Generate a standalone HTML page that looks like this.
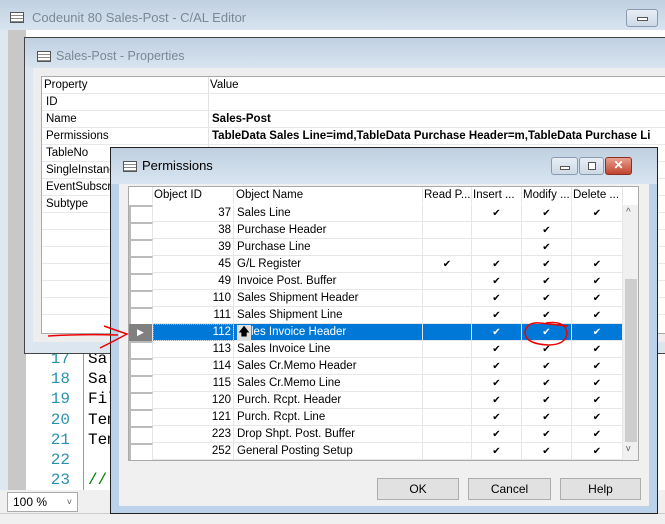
<!DOCTYPE html>
<html><head><style>
*{margin:0;padding:0;box-sizing:border-box}
body{width:665px;height:524px;overflow:hidden;position:relative;background:#dfe7f0;font-family:"Liberation Sans",sans-serif;font-size:11px;color:#000}
.a{position:absolute}
.tb{background:linear-gradient(#c0d0e0,#d8e4f0)}
.icon{position:absolute;width:14px;height:11px;border:1px solid #555;background:repeating-linear-gradient(#fff 0 2px,#888 2px 3px)}
.btn{position:absolute;border:1px solid #8a9ab0;border-radius:3px;background:linear-gradient(#e8eef5,#cdd9e6)}
.row{position:absolute;left:0;height:17px;width:494px;border-bottom:1px solid #e6e6e6}
.c{position:absolute;top:0;height:17px;line-height:17px;border-right:1px solid #e6e6e6;white-space:nowrap;overflow:hidden;font-size:11.5px}
.pb{position:absolute;height:22px;border:1px solid #adadad;background:#e1e1e1;text-align:center;line-height:20px;font-size:12px}
</style></head><body>
<div class="a tb" style="left:0;top:0;width:665px;height:30px"></div>
<div class="icon" style="left:10px;top:12px"></div>
<div class="a" style="left:32px;top:10px;font-size:13px;color:#7a8896">Codeunit 80 Sales-Post - C/AL Editor</div>
<div class="btn" style="left:626px;top:9px;width:32px;height:18px"><div class="a" style="left:10px;top:7px;width:11px;height:4px;border:1px solid #555;background:#fff"></div></div>
<div class="a" style="left:8px;top:30px;width:18px;height:484px;background:#c8c8c8"></div>
<div class="a" style="left:26px;top:30px;width:639px;height:460px;background:#fff"></div>
<div class="a" style="left:83px;top:350px;width:1px;height:140px;background:#999"></div>
<div class="a" style="left:44px;top:349px;font-family:'Liberation Mono',monospace;font-size:16px;line-height:20.2px;color:#2b91af;text-align:right;width:26px">17<br>18<br>19<br>20<br>21<br>22<br>23</div>
<div class="a" style="left:88px;top:349px;font-family:'Liberation Mono',monospace;font-size:16px;line-height:20.2px">Sal<br>Sal<br>Fil<br>Tem<br>Tem<br><br><span style="color:#008000">//</span></div>
<div class="a" style="left:0;top:490px;width:665px;height:24px;background:#f0f0f0"></div>
<div class="a" style="left:7px;top:492px;width:71px;height:20px;border:1px solid #aaa;background:#fff;font-size:12px;line-height:18px;padding-left:5px">100 %<span style="position:absolute;right:5px;font-size:9px;color:#555">˅</span></div>
<div class="a" style="left:0;top:513px;width:665px;height:11px;background:#f0f0f0;border-top:1px solid #ccc"></div>

<div class="a" style="left:24px;top:37px;width:645px;height:317px;border:1px solid #444;background:#dce6f0"></div>
<div class="a tb" style="left:25px;top:38px;width:640px;height:30px"></div>
<div class="icon" style="left:37px;top:51px"></div>
<div class="a" style="left:56px;top:49px;font-size:12.5px;color:#7a8896">Sales-Post - Properties</div>
<div class="a" style="left:33px;top:68px;width:632px;height:274px;background:#eee"></div>
<div class="a" style="left:41px;top:76px;width:624px;height:258px;background:#fff;border:1px solid #aaa;border-right:none">
 <div class="a" style="left:166px;top:0;width:1px;height:256px;background:#e2e2e2"></div>
 <div class="a" style="left:0;top:0;width:624px;font-size:11.5px;line-height:17px">
  <div style="height:17px;border-bottom:1px solid #e8e8e8;padding-left:2px">Property<span class="a" style="left:168px">Value</span></div>
  <div style="height:17px;border-bottom:1px solid #e8e8e8;padding-left:4px">ID</div>
  <div style="height:17px;border-bottom:1px solid #e8e8e8;padding-left:4px">Name<b class="a" style="left:170px">Sales-Post</b></div>
  <div style="height:17px;border-bottom:1px solid #e8e8e8;padding-left:4px;white-space:nowrap">Permissions<b class="a" style="left:170px">TableData Sales Line=imd,TableData Purchase Header=m,TableData Purchase Li</b></div>
  <div style="height:17px;border-bottom:1px solid #e8e8e8;padding-left:4px">TableNo</div>
  <div style="height:17px;border-bottom:1px solid #e8e8e8;padding-left:4px">SingleInstance</div>
  <div style="height:17px;border-bottom:1px solid #e8e8e8;padding-left:4px">EventSubscriber</div>
  <div style="height:17px;border-bottom:1px solid #e8e8e8;padding-left:4px">Subtype</div>
  <div style="height:17px;border-bottom:1px solid #e8e8e8"></div>
  <div style="height:17px;border-bottom:1px solid #e8e8e8"></div>
  <div style="height:17px;border-bottom:1px solid #e8e8e8"></div>
  <div style="height:17px;border-bottom:1px solid #e8e8e8"></div>
  <div style="height:17px;border-bottom:1px solid #e8e8e8"></div>
  <div style="height:17px;border-bottom:1px solid #e8e8e8"></div>
 </div>
</div>

<div class="a" style="left:110px;top:147px;width:548px;height:367px;border:1px solid #222;background:#bcd2ea"></div>
<div class="a tb" style="left:111px;top:148px;width:546px;height:36px"></div>
<div class="icon" style="left:123px;top:161px"></div>
<div class="a" style="left:142px;top:158px;font-size:13px">Permissions</div>
<div class="btn" style="left:551px;top:157px;width:27px;height:18px"><div class="a" style="left:8px;top:8px;width:10px;height:4px;border:1px solid #555;background:#fff"></div></div>
<div class="btn" style="left:579px;top:157px;width:25px;height:18px"><div class="a" style="left:8px;top:4px;width:8px;height:8px;border:1px solid #555;background:#fff"></div></div>
<div class="btn" style="left:605px;top:157px;width:27px;height:18px;background:linear-gradient(#e8a090,#c0442e);border-color:#8a3020;color:#fff;text-align:center;font-weight:bold;font-size:12px;line-height:15px">✕</div>
<div class="a" style="left:119px;top:184px;width:530px;height:322px;background:#f0f0f0"></div>
<div class="a" style="left:128px;top:186px;width:511px;height:275px;background:#fff;border:1px solid #aaa">
 <div class="row" style="top:0;border-bottom:none">
  <div class="c" style="left:0;width:24px"></div><div class="c" style="left:24px;width:81px;padding-left:1px">Object ID</div><div class="c" style="left:105px;width:189px;padding-left:2px">Object Name</div><div class="c" style="left:294px;width:49px;padding-left:1px">Read P...</div><div class="c" style="left:343px;width:50px;padding-left:1px">Insert ...</div><div class="c" style="left:393px;width:50px;padding-left:1px">Modify ...</div><div class="c" style="left:443px;width:51px;padding-left:1px">Delete ...</div>
 </div>
 <div id="rows"></div>
 <div class="a" style="left:494px;top:18px;width:15px;height:255px;background:#f0f0f0"></div>
 <div class="a" style="left:496px;top:92px;width:12px;height:163px;background:#cdcdcd"></div>
 <div class="a" style="left:497px;top:20px;font-size:10px;color:#606060">^</div>
 <div class="a" style="left:497px;top:256px;font-size:9px;color:#606060">v</div>
</div>
<div class="pb" style="left:377px;top:478px;width:82px">OK</div>
<div class="pb" style="left:468px;top:478px;width:83px">Cancel</div>
<div class="pb" style="left:560px;top:478px;width:81px">Help</div>

<svg class="a" style="left:0;top:0" width="665" height="524">
<path d="M48 336 Q80 334 118 335 M104 326 Q118 331 127 334 Q116 340 100 348" stroke="#e00" stroke-width="1.5" fill="none"/>
<path d="M546 323 Q565 320 567 333 Q566 345 548 345 Q526 344 525 333 Q526 322 540 323 L568 326" stroke="#e00" stroke-width="1.5" fill="none"/>
</svg>
<script>
var d=[["37","Sales Line","_imd"],["38","Purchase Header","__m_"],["39","Purchase Line","__m_"],["45","G/L Register","rimd"],["49","Invoice Post. Buffer","_imd"],["110","Sales Shipment Header","_imd"],["111","Sales Shipment Line","_imd"],["112","Sales Invoice Header","_imd"],["113","Sales Invoice Line","_imd"],["114","Sales Cr.Memo Header","_imd"],["115","Sales Cr.Memo Line","_imd"],["120","Purch. Rcpt. Header","_imd"],["121","Purch. Rcpt. Line","_imd"],["223","Drop Shpt. Post. Buffer","_imd"],["252","General Posting Setup","_imd"]];
var h="",L=[294,343,393,443],W=[49,50,50,51];
d.forEach(function(r,i){var s=i==7;var bg=s?"background:#0078d7;color:#fff;":"";
h+='<div class="row" style="top:'+(18+i*17)+'px;'+bg+'">';
h+='<div class="c" style="left:0;width:24px;'+(s?'background:#808080;color:#fff;text-align:center;font-size:9px':'border-left:2px solid #bbb;border-top:2px solid #bbb;background:#fff')+'">'+(s?'▶':'')+'</div>';
h+='<div class="c" style="left:24px;width:81px;text-align:right;padding-right:2px;'+(s?'outline:1px dotted #f90;outline-offset:-1px':'')+'">'+r[0]+'</div>';
h+='<div class="c" style="left:105px;width:189px;padding-left:3px">'+(s?'<span style="display:inline-block;width:14px;height:15px;background:#e0e0e0;color:#000;text-align:center;line-height:15px;vertical-align:top;margin-top:1px">🡅</span>les Invoice Header':r[1])+'</div>';
for(var k=0;k<4;k++){h+='<div class="c" style="left:'+L[k]+'px;width:'+W[k]+'px;text-align:center;font-size:10px">'+(r[2][k]!="_"?"✔":"")+'</div>';}
h+='</div>';});
document.getElementById("rows").innerHTML=h;
</script>
</body></html>
